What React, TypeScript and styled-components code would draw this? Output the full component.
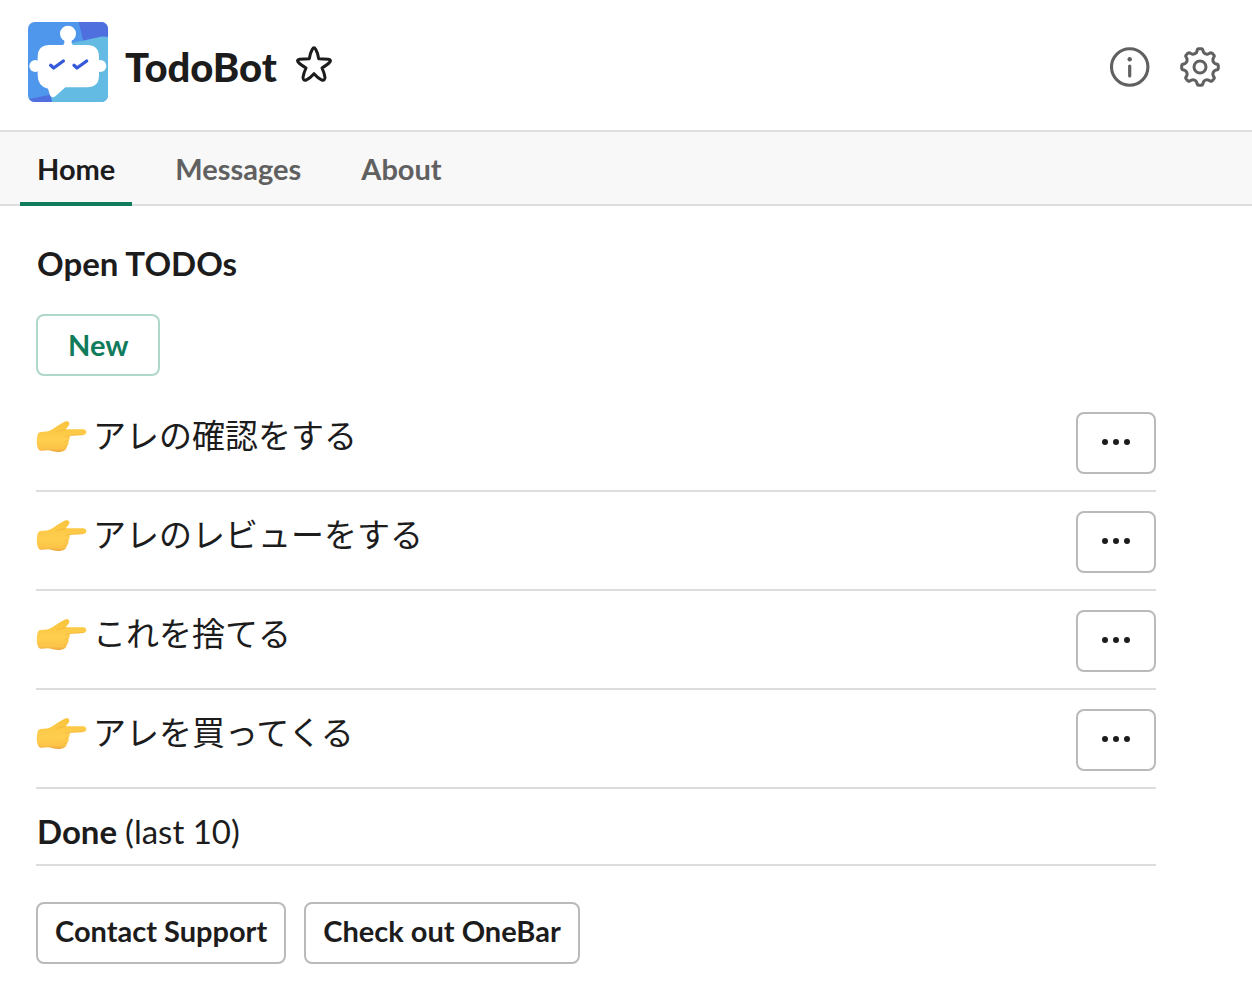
import React from "react";
import styled, { createGlobalStyle } from "styled-components";

const GlobalStyle = createGlobalStyle`
  *, *::before, *::after { box-sizing: border-box; }
  body {
    margin: 0;
    background: #fff;
    color: #1d1c1d;
    font-family: Lato, "Noto Sans CJK JP", sans-serif;
  }
`;

const Header = styled.header`
  display: flex;
  align-items: center;
  height: 132px;
  padding: 0 32px 6px 28px;
  border-bottom: 2px solid #e0e0e0;
`;

const AppTitle = styled.h1`
  margin: 10px 19px 0 17px;
  font-size: 40px;
  font-weight: 900;
  line-height: 48px;
`;

const IconButton = styled.button`
  display: flex;
  padding: 0;
  border: 0;
  background: none;
  color: ${(p) => p.color || "#1d1c1d"};
  cursor: pointer;
`;

const StarButton = styled(IconButton)`
  padding-top: 4px;
`;

const HeaderActions = styled.div`
  display: flex;
  gap: 30px;
  margin: 10px 0 0 auto;
`;

const Tabs = styled.nav`
  display: flex;
  gap: 26px;
  height: 74px;
  padding-left: 20px;
  background: #f8f8f8;
  box-shadow: inset 0 -2px #dddddd;
`;

const Tab = styled.a<{ $active?: boolean }>`
  padding: 19px 17px 0;
  border-bottom: 4px solid ${(p) => (p.$active ? "#107c5c" : "transparent")};
  color: ${(p) => (p.$active ? "#1d1c1d" : "#616061")};
  font-size: 29px;
  font-weight: 700;
  line-height: 36px;
  text-decoration: none;
`;

const Content = styled.main`
  padding: 35px 96px 24px 36px;
`;

const SectionTitle = styled.h2`
  margin: 0;
  font-size: 33px;
  font-weight: 700;
  line-height: 44px;
  text-indent: 1px;
`;

const Button = styled.button<{ $primary?: boolean }>`
  height: 62px;
  padding: ${(p) => (p.$primary ? "0 30px" : "0 17px 4px")};
  border: 2px solid ${(p) => (p.$primary ? "#b0d7cb" : "#bbbabb")};
  border-radius: 8px;
  background: #fff;
  color: ${(p) => (p.$primary ? "#107c5c" : "#1d1c1d")};
  font-family: inherit;
  font-size: 29px;
  font-weight: 700;
  line-height: 36px;
  cursor: pointer;
`;

const MoreButton = styled(Button)`
  display: flex;
  align-items: center;
  justify-content: center;
  width: 80px;
  padding: 0 0 2px;
`;

const Toolbar = styled.div`
  display: flex;
  gap: 18px;
  padding: 29px 0 17px;
`;

const FooterActions = styled(Toolbar)`
  padding: 36px 0 0;
`;

const TodoList = styled.ul`
  margin: 0;
  padding: 0;
  list-style: none;
`;

const TodoItem = styled.li`
  display: flex;
  align-items: flex-start;
  justify-content: space-between;
  padding: 19px 0 16px;
  border-bottom: 2px solid #dddddd;
`;

const TodoText = styled.span`
  display: flex;
  align-items: center;
  gap: 6px;
  font-size: 33px;
  line-height: 46px;

  svg {
    margin-top: 4px;
  }
`;

const DoneTitle = styled(SectionTitle)`
  padding: 20px 0 11px;
  border-bottom: 2px solid #dddddd;
`;

const Count = styled.span`
  font-weight: 400;
`;

const BotLogo = () => (
  <svg width="80" height="80" viewBox="0 0 240 240" role="img" aria-label="TodoBot logo">
    <defs>
      <clipPath id="logo-shape">
        <rect width="240" height="240" rx="20" />
      </clipPath>
    </defs>
    <g clipPath="url(#logo-shape)">
      <rect width="240" height="240" fill="#4f97ed" />
      <path d="M152 0 167 62 240 50V0Z" fill="#506fdf" />
      <path d="M120 66 218 44Q230 42 240 45V240H72L66 200Z" fill="#63bbe3" />
      <path d="M0 232 66 218 72 240H0Z" fill="#506fdf" />
      <g fill="#fff">
        <circle cx="120" cy="35" r="24" />
        <path d="M109 50H131V62Q131 69 140 69H100Q109 69 109 62Z" />
        <circle cx="22" cy="132" r="18" />
        <circle cx="217" cy="132" r="18" />
        <path d="M65 69H177Q213 69 213 105V160Q213 196 177 196H112L83 222Q72 231 66 220L60 200Q29 194 29 160V105Q29 69 65 69Z" />
      </g>
      <path
        d="M68 130 77 138 106 117M138 130 147 138 176 117"
        fill="none"
        stroke="#3559db"
        strokeWidth="10"
        strokeLinecap="round"
        strokeLinejoin="round"
      />
    </g>
  </svg>
);

const StarIcon = () => (
  <svg width="36" height="36" viewBox="0 0 108 108" fill="none" stroke="currentColor" strokeWidth="9" strokeLinejoin="round" aria-hidden="true">
    <path d="M49 10Q54 0 59 10C64 19 67 28 68 38L97 40Q108 42 100 50C94 56 86 61 78 66C83 77 86 86 87 94Q87 105 77 102C68 97 61 91 54 83C47 91 40 97 31 102Q21 105 21 94C22 86 25 77 30 66C22 61 14 56 8 50Q0 42 11 40L40 38C41 28 44 19 49 10Z" />
  </svg>
);

const InfoIcon = () => (
  <svg width="40" height="40" viewBox="0 0 40 40" fill="none" stroke="currentColor" strokeLinecap="round" aria-hidden="true">
    <circle cx="19.7" cy="20" r="18.2" strokeWidth="3.1" />
    <path d="M19.7 19V29" strokeWidth="3.2" />
    <circle cx="19.7" cy="12.3" r="2.2" fill="currentColor" stroke="none" />
  </svg>
);

/* One tooth of the gear, repeated at eight angles around the centre. */
const gearOutline = (): string => {
  const at = (radius: number, degrees: number) => {
    const a = (degrees * Math.PI) / 180;
    return `${(60 + radius * Math.sin(a)).toFixed(1)} ${(60 - radius * Math.cos(a)).toFixed(1)}`;
  };
  let d = `M${at(44, -14)}`;
  for (let i = 0; i < 8; i++) {
    const t = i * 45;
    d += `L${at(50, t - 10)}Q${at(55, t - 9)} ${at(55, t - 4)}L${at(55, t + 4)}Q${at(55, t + 9)} ${at(50, t + 10)}`;
    d += `L${at(46, t + 13)}Q${at(40, t + 22.5)} ${at(46, t + 32)}`;
  }
  return d + "Z";
};

const GearIcon = () => (
  <svg width="40" height="40" viewBox="0 0 120 120" fill="none" stroke="currentColor" strokeWidth="9" strokeLinejoin="round" aria-hidden="true">
    <path d={gearOutline()} />
    <circle cx="60" cy="60" r="18" />
  </svg>
);

const PointingHand = () => (
  <svg width="51" height="36" viewBox="0 0 153 108" role="img" aria-label="Pointing right">
    <defs>
      <linearGradient id="hand-skin" x1="0" y1="0" x2="0" y2="1">
        <stop offset="0" stopColor="#f9c43c" />
        <stop offset="0.6" stopColor="#ffce4f" />
        <stop offset="0.88" stopColor="#fcc548" />
        <stop offset="1" stopColor="#efa640" />
      </linearGradient>
    </defs>
    <path
      d="M6 44C12 36 26 40 38 36C54 30 66 17 86 8C97 4 104 12 98 20L89 31H141Q151 32 151 40Q150 48 141 48L101 50C103 57 100 62 97 65C100 72 97 79 92 82C93 91 86 97 75 98C60 101 49 96 37 94C26 93 13 100 7 90C1 78 1 58 6 44Z"
      fill="url(#hand-skin)"
    />
    <path d="M100 50Q94 50 89 53M97 65Q92 67 88 68M92 82Q87 84 83 83M63 37Q76 35 88 31" fill="none" stroke="#f0af37" strokeWidth="2" strokeLinecap="round" />
    <path d="M101 49 141 47" fill="none" stroke="#f2b238" strokeWidth="2" strokeLinecap="round" />
  </svg>
);

const DotsIcon = () => (
  <svg width="30" height="8" viewBox="0 0 30 8" fill="currentColor" aria-hidden="true">
    <circle cx="4" cy="4" r="3" />
    <circle cx="15" cy="4" r="3" />
    <circle cx="26" cy="4" r="3" />
  </svg>
);

const todos = ["アレの確認をする", "アレのレビューをする", "これを捨てる", "アレを買ってくる"];

export default function App() {
  return (
    <>
      <GlobalStyle />
      <Header>
        <BotLogo />
        <AppTitle>TodoBot</AppTitle>
        <StarButton aria-label="Star TodoBot">
          <StarIcon />
        </StarButton>
        <HeaderActions>
          <IconButton color="#616061" aria-label="Info">
            <InfoIcon />
          </IconButton>
          <IconButton color="#616061" aria-label="Settings">
            <GearIcon />
          </IconButton>
        </HeaderActions>
      </Header>
      <Tabs>
        <Tab href="#home" $active aria-current="page">Home</Tab>
        <Tab href="#messages">Messages</Tab>
        <Tab href="#about">About</Tab>
      </Tabs>
      <Content>
        <SectionTitle>Open TODOs</SectionTitle>
        <Toolbar>
          <Button $primary>New</Button>
        </Toolbar>
        <TodoList>
          {todos.map((todo) => (
            <TodoItem key={todo}>
              <TodoText>
                <PointingHand />
                {todo}
              </TodoText>
              <MoreButton aria-label={`More actions: ${todo}`}>
                <DotsIcon />
              </MoreButton>
            </TodoItem>
          ))}
        </TodoList>
        <DoneTitle>
          Done <Count>(last 10)</Count>
        </DoneTitle>
        <FooterActions>
          <Button>Contact Support</Button>
          <Button>Check out OneBar</Button>
        </FooterActions>
      </Content>
    </>
  );
}
